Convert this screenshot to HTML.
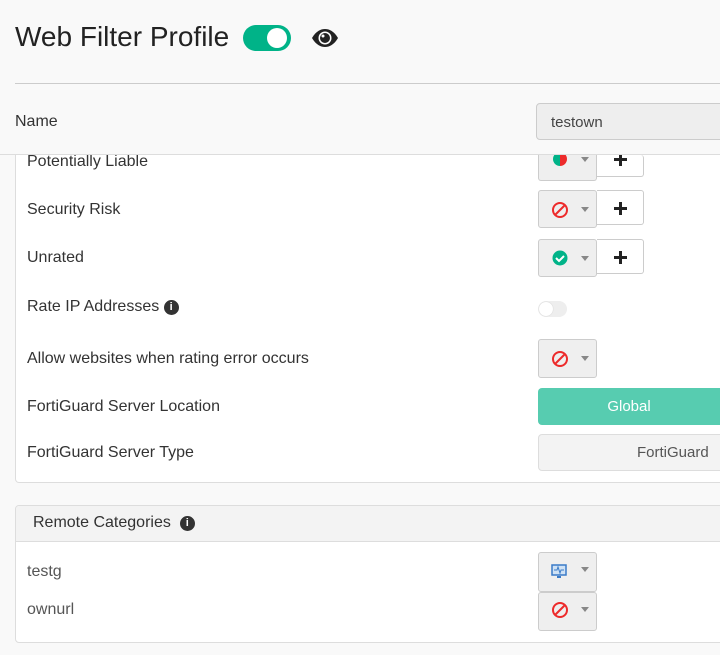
<!DOCTYPE html>
<html><head><style>
*{box-sizing:border-box;margin:0;padding:0}
body{width:720px;height:655px;overflow:hidden;background:#f9f9f9;font-family:"Liberation Sans",sans-serif;color:#333;position:relative}
.abs{position:absolute}
.t{font-size:16px;color:#333}
.dd{position:absolute;left:538px;width:59px;height:38px;background:#efefef;border:1px solid #ccc;border-radius:3px}
.dd .ic{position:absolute;left:12px;top:10px}
.dd .ar{position:absolute;left:42px;top:16px;width:0;height:0;border-left:4px solid transparent;border-right:4px solid transparent;border-top:5px solid #888}
.pl{position:absolute;left:597px;width:47px;height:35px;background:#fff;border:1px solid #ccc;border-left:none;border-radius:0 3px 3px 0}
.pl svg{position:absolute;left:17px;top:11px}
.inf{display:inline-block;width:15px;height:15px;border-radius:8px;background:#333;color:#fff;font-size:11px;font-weight:bold;text-align:center;line-height:15px;vertical-align:1px}
</style></head><body>
<div class="abs" style="left:15px;top:21px;font-size:28px;color:#222">Web Filter Profile</div>
<div class="abs" style="left:243px;top:25px;width:48px;height:26px;border-radius:13px;background:#00b388"></div>
<div class="abs" style="left:267px;top:28px;width:20px;height:20px;border-radius:10px;background:#fff"></div>
<svg class="abs" style="left:311px;top:28px" width="28" height="20" viewBox="0 0 28 20"><path d="M1 10C5 3 10 1 14 1s9 2 13 9c-4 7-9 9-13 9S5 17 1 10z" fill="#222"/><circle cx="14" cy="10" r="6.5" fill="#fff"/><circle cx="14" cy="10" r="5" fill="#222"/><circle cx="12" cy="8" r="1.5" fill="#fff"/></svg>
<div class="abs" style="left:15px;top:83px;width:705px;height:1px;background:#ccc"></div>
<div class="abs t" style="left:15px;top:113px">Name</div>
<div class="abs" style="left:536px;top:103px;width:190px;height:37px;background:#eee;border:1px solid #ccc;border-radius:4px;padding:10px 14px;font-size:15px;color:#444">testown</div>

<div class="abs" style="left:15px;top:155px;width:710px;height:328px;background:#fff;border:1px solid #ddd;border-top:none;border-radius:0 0 4px 4px"></div>
<div class="abs" style="left:0;top:154px;width:720px;height:1px;background:#ddd"></div>

<div class="abs t" style="left:27px;top:153px;clip-path:inset(2px 0 0 0)">Potentially Liable</div>
<div class="dd" style="top:135px;height:46px;border-top:none;clip-path:inset(20px 0 0 0)"><svg class="ic" style="top:16px" width="18" height="16"><path d="M9 1A7 7 0 0 0 9 15z" fill="#00b388"/><path d="M9 1A7 7 0 0 1 9 15z" fill="#ed2b2b"/></svg><div class="ar" style="top:22px"></div></div>
<div class="pl" style="top:155px;height:22px;border-top:none;overflow:hidden"><svg style="top:-2px" width="13" height="13"><path d="M6.5 0v13M0 6.5h13" stroke="#222" stroke-width="3"/></svg></div>

<div class="abs t" style="left:27px;top:201px">Security Risk</div>
<div class="dd" style="top:190px"><svg class="ic" width="18" height="18"><circle cx="9" cy="9" r="7" fill="none" stroke="#ed2b2b" stroke-width="2"/><path d="M4 14L14 4" stroke="#ed2b2b" stroke-width="2"/></svg><div class="ar"></div></div>
<div class="pl" style="top:190px"><svg width="13" height="13"><path d="M6.5 0v13M0 6.5h13" stroke="#222" stroke-width="3"/></svg></div>

<div class="abs t" style="left:27px;top:249px">Unrated</div>
<div class="dd" style="top:239px"><svg class="ic" width="18" height="18"><circle cx="9" cy="8" r="7.5" fill="#00b388"/><path d="M5 8l3 3 5-5" stroke="#fff" stroke-width="2" fill="none"/></svg><div class="ar"></div></div>
<div class="pl" style="top:239px"><svg width="13" height="13"><path d="M6.5 0v13M0 6.5h13" stroke="#222" stroke-width="3"/></svg></div>

<div class="abs t" style="left:27px;top:298px">Rate IP Addresses <span class="inf">i</span></div>
<div class="abs" style="left:538px;top:301px;width:29px;height:16px;border-radius:8px;background:#eee"></div>
<div class="abs" style="left:539px;top:302px;width:14px;height:14px;border-radius:7px;background:#fff;box-shadow:0 0 1px #bbb"></div>

<div class="abs t" style="left:27px;top:350px">Allow websites when rating error occurs</div>
<div class="dd" style="top:339px;height:39px"><svg class="ic" width="18" height="18"><circle cx="9" cy="9" r="7" fill="none" stroke="#ed2b2b" stroke-width="2"/><path d="M4 14L14 4" stroke="#ed2b2b" stroke-width="2"/></svg><div class="ar"></div></div>

<div class="abs t" style="left:27px;top:398px">FortiGuard Server Location</div>
<div class="abs" style="left:538px;top:388px;width:190px;height:37px;background:#57ccb0;border-radius:4px;color:#fff;font-size:15px;text-align:center;line-height:37px;padding-right:8px">Global</div>
<div class="abs t" style="left:27px;top:444px">FortiGuard Server Type</div>
<div class="abs" style="left:538px;top:434px;width:190px;height:37px;background:#f3f3f3;border:1px solid #ddd;border-radius:4px;color:#555;font-size:15px;line-height:35px;padding-left:98px">FortiGuard</div>

<div class="abs" style="left:15px;top:505px;width:710px;height:138px;background:#fff;border:1px solid #ddd;border-radius:4px;overflow:hidden">
<div style="height:36px;background:#f3f3f3;border-bottom:1px solid #ddd;padding:8px 17px;font-size:16px;color:#333">Remote Categories&nbsp; <span class="inf">i</span></div>
</div>
<div class="abs t" style="left:27px;top:563px;color:#555">testg</div>
<div class="dd" style="top:552px;height:40px"><svg class="ic" style="top:11px" width="16" height="16"><rect x="1" y="1" width="14" height="10" fill="#cfe2f5" stroke="#3a7bc8" stroke-width="1.5"/><path d="M3 6h3l1-3 2 6 1-3h3" stroke="#3a7bc8" fill="none"/><path d="M6 13h4" stroke="#3a7bc8" stroke-width="2"/></svg><div class="ar" style="top:14px"></div></div>
<div class="abs t" style="left:27px;top:601px;color:#555">ownurl</div>
<div class="dd" style="top:592px;height:39px"><svg class="ic" style="top:8px" width="18" height="18"><circle cx="9" cy="9" r="7" fill="none" stroke="#ed2b2b" stroke-width="2"/><path d="M4 14L14 4" stroke="#ed2b2b" stroke-width="2"/></svg><div class="ar" style="top:14px"></div></div>
</body></html>
